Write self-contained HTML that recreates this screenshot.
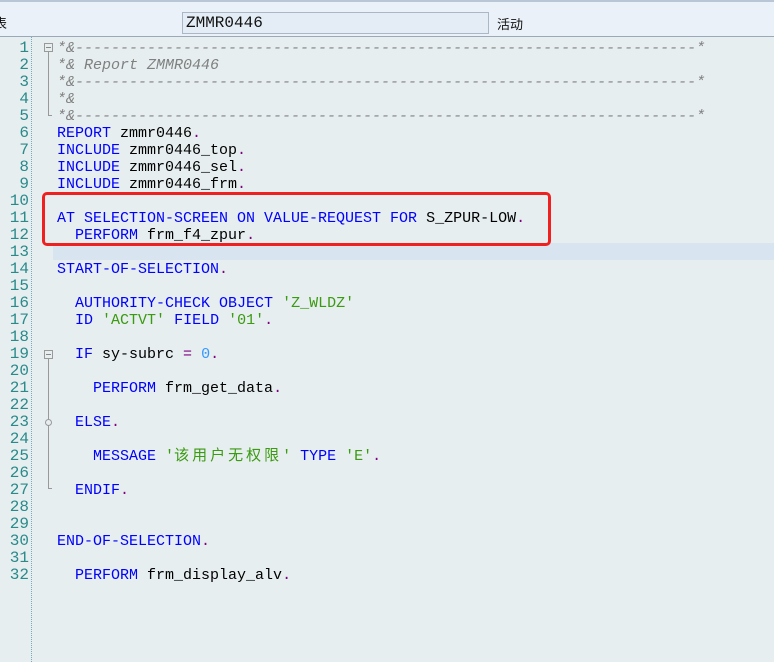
<!DOCTYPE html>
<html><head><meta charset="utf-8"><style>
body{margin:0;width:774px;height:662px;overflow:hidden;background:#e6eef0;position:relative;font-family:"Liberation Mono","Noto Sans CJK SC",monospace;}
#top{position:absolute;left:0;top:0;width:774px;height:37px;background:#eaf1f8;border-top:2px solid #b8c6d6;box-sizing:border-box;border-bottom:1px solid #9aa8b8;}
#inp{position:absolute;left:182px;top:10px;width:307px;height:22px;background:#e4ecf5;border:1px solid #a9b7c6;box-sizing:border-box;font-size:16px;line-height:20px;padding-left:3px;color:#111;}
.t{position:absolute;font-family:"Liberation Sans","Noto Sans CJK SC",sans-serif;font-size:13px;color:#111;}
#gut{position:absolute;left:0;top:37px;width:31px;height:625px;border-right:1px dotted #7ab;}
.n{position:absolute;left:0;width:29px;text-align:right;font-size:16px;line-height:17px;color:#2a8a8a;margin-top:1px}
.l{position:absolute;left:57px;font-size:15px;line-height:17px;white-space:pre;color:#000;margin-top:1px}
.k{color:#0000ff}.c{color:#808080;font-style:italic}.s{color:#3a9a10}.p{color:#800080}.num{color:#3399ff}
.cj{letter-spacing:3px}
.fold{position:absolute;left:44px;width:7px;height:7px;border:1px solid #999;font-size:0}
.fold:after{content:"";position:absolute;left:1px;top:3px;width:5px;height:1px;background:#888}
.vl{position:absolute;left:48px;width:1px;background:#999}
</style></head><body>
<div id="top"><span class="t" style="left:-6px;top:11px">表</span><div id="inp">ZMMR0446</div><span class="t" style="left:497px;top:12px">活动</span></div>
<div id="gut"></div>
<div style="position:absolute;left:53px;top:243px;width:721px;height:17px;background:#d8e4ef"></div>
<div class="n" style="top:39px">1</div><div class="n" style="top:56px">2</div><div class="n" style="top:73px">3</div><div class="n" style="top:90px">4</div><div class="n" style="top:107px">5</div><div class="n" style="top:124px">6</div><div class="n" style="top:141px">7</div><div class="n" style="top:158px">8</div><div class="n" style="top:175px">9</div><div class="n" style="top:192px">10</div><div class="n" style="top:209px">11</div><div class="n" style="top:226px">12</div><div class="n" style="top:243px">13</div><div class="n" style="top:260px">14</div><div class="n" style="top:277px">15</div><div class="n" style="top:294px">16</div><div class="n" style="top:311px">17</div><div class="n" style="top:328px">18</div><div class="n" style="top:345px">19</div><div class="n" style="top:362px">20</div><div class="n" style="top:379px">21</div><div class="n" style="top:396px">22</div><div class="n" style="top:413px">23</div><div class="n" style="top:430px">24</div><div class="n" style="top:447px">25</div><div class="n" style="top:464px">26</div><div class="n" style="top:481px">27</div><div class="n" style="top:498px">28</div><div class="n" style="top:515px">29</div><div class="n" style="top:532px">30</div><div class="n" style="top:549px">31</div><div class="n" style="top:566px">32</div>
<div class="fold" style="top:43px"></div><div class="vl" style="top:52px;height:64px"></div><div class="vl" style="top:115px;width:4px;height:1px"></div>
<div class="fold" style="top:350px"></div><div class="vl" style="top:359px;height:130px"></div><div class="vl" style="top:488px;width:4px;height:1px"></div>
<div style="position:absolute;left:45px;top:419px;width:5px;height:5px;border:1px solid #999;border-radius:50%;background:#e6eef0"></div>
<div class="l c" style="top:39px">*&amp;---------------------------------------------------------------------*</div>
<div class="l c" style="top:56px">*&amp; Report ZMMR0446</div>
<div class="l c" style="top:73px">*&amp;---------------------------------------------------------------------*</div>
<div class="l c" style="top:90px">*&amp;</div>
<div class="l c" style="top:107px">*&amp;---------------------------------------------------------------------*</div>
<div class="l" style="top:124px"><span class="k">REPORT</span> zmmr0446<span class="p">.</span></div>
<div class="l" style="top:141px"><span class="k">INCLUDE</span> zmmr0446_top<span class="p">.</span></div>
<div class="l" style="top:158px"><span class="k">INCLUDE</span> zmmr0446_sel<span class="p">.</span></div>
<div class="l" style="top:175px"><span class="k">INCLUDE</span> zmmr0446_frm<span class="p">.</span></div>
<div class="l" style="top:209px"><span class="k">AT SELECTION-SCREEN ON VALUE-REQUEST FOR</span> S_ZPUR-LOW<span class="p">.</span></div>
<div class="l" style="top:226px">  <span class="k">PERFORM</span> frm_f4_zpur<span class="p">.</span></div>
<div class="l" style="top:260px"><span class="k">START-OF-SELECTION</span><span class="p">.</span></div>
<div class="l" style="top:294px">  <span class="k">AUTHORITY-CHECK OBJECT</span> <span class="s">'Z_WLDZ'</span></div>
<div class="l" style="top:311px">  <span class="k">ID</span> <span class="s">'ACTVT'</span> <span class="k">FIELD</span> <span class="s">'01'</span><span class="p">.</span></div>
<div class="l" style="top:345px">  <span class="k">IF</span> sy-subrc <span class="p">=</span> <span class="num">0</span><span class="p">.</span></div>
<div class="l" style="top:379px">    <span class="k">PERFORM</span> frm_get_data<span class="p">.</span></div>
<div class="l" style="top:413px">  <span class="k">ELSE</span><span class="p">.</span></div>
<div class="l" style="top:447px">    <span class="k">MESSAGE</span> <span class="s">'<span class="cj">该用户无权限</span>'</span> <span class="k">TYPE</span> <span class="s">'E'</span><span class="p">.</span></div>
<div class="l" style="top:481px">  <span class="k">ENDIF</span><span class="p">.</span></div>
<div class="l" style="top:532px"><span class="k">END-OF-SELECTION</span><span class="p">.</span></div>
<div class="l" style="top:566px">  <span class="k">PERFORM</span> frm_display_alv<span class="p">.</span></div>
<div style="position:absolute;left:42px;top:192px;width:509px;height:54px;border:3px solid #f02020;border-radius:5px;box-sizing:border-box"></div>
</body></html>
